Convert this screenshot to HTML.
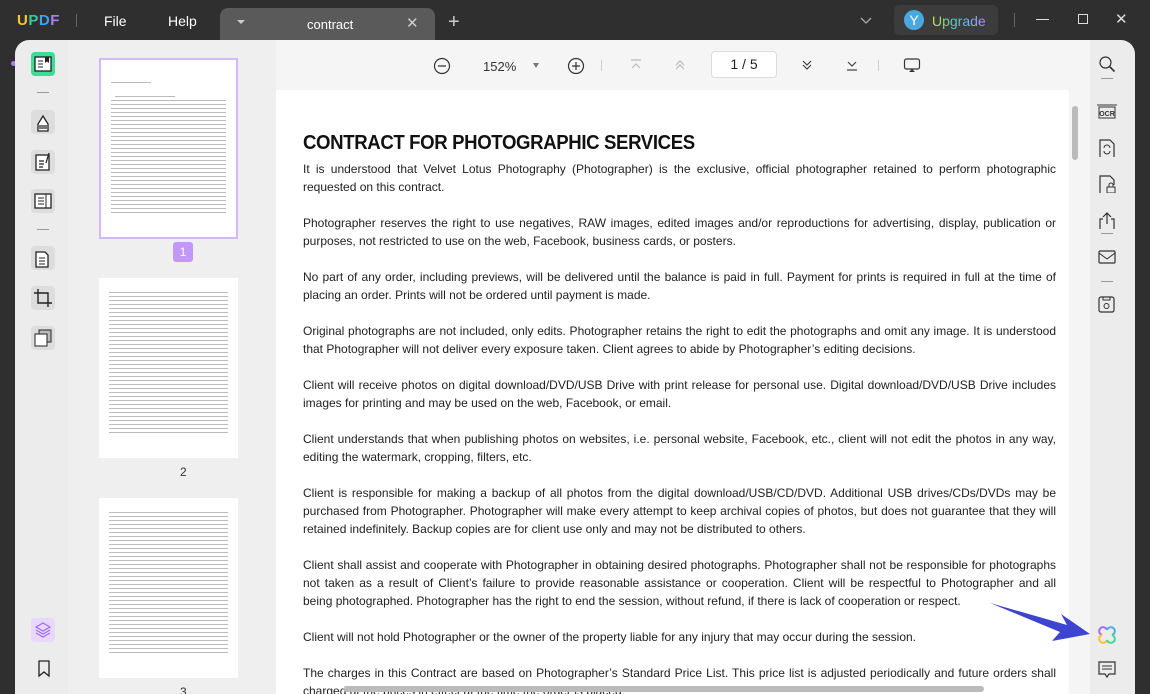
<!DOCTYPE html>
<html><head><meta charset="utf-8"><style>
*{margin:0;padding:0;box-sizing:border-box}
body{width:1150px;height:694px;background:#2f2f2f;font-family:"Liberation Sans",sans-serif;position:relative;overflow:hidden}
.abs{position:absolute}
.title{color:#fff;font-size:14px}
.main{left:15px;top:40px;width:1120px;height:654px;background:#ececec;border-radius:14px 14px 0 0;overflow:hidden}
.lbtn{position:absolute;left:16px;width:24px;height:24px;border-radius:4px;background:#ddd}
.sep{position:absolute;height:1px;width:12px;background:#999}
.thumbs{left:53px;top:0;width:208px;height:654px;background:#efefef}
.thumb{position:absolute;left:31px;width:139px;background:#fff}
.tl{height:1px;background:#bbb;margin:0 10px 3px 10px}
.doc{left:261px;top:0;width:814px;height:654px;background:#f5f5f5}
.page{left:0;top:50px;width:793px;height:604px;background:#fff;overflow:hidden}
.txt{position:absolute;left:27px;width:753px;font-size:12px;line-height:18px;color:#222}
.ln{text-align:justify;text-align-last:justify;height:18px;overflow:hidden}
.ln.l{text-align-last:left}
.p{margin-bottom:18px}
.ric{position:absolute;left:1098px;width:18px;height:18px}
</style></head><body>
<div class="abs" style="left:17px;top:12px;font-weight:bold;font-size:15px;letter-spacing:0.5px"><span style="color:#f9c52a">U</span><span style="color:#3ec7a0">P</span><span style="color:#3ba3f0">D</span><span style="color:#b07cf5">F</span></div>
<div class="abs" style="left:76px;top:14px;width:1px;height:13px;background:#666"></div>
<div class="abs title" style="left:104px;top:13px">File</div>
<div class="abs title" style="left:168px;top:13px">Help</div>
<div class="abs" style="left:220px;top:8px;width:215px;height:32px;background:#5a5a5a;border-radius:8px 8px 0 0"></div>
<div class="abs" style="left:237px;top:20px;border-left:4px solid transparent;border-right:4px solid transparent;border-top:4px solid #ccc"></div>
<div class="abs title" style="left:307px;top:17px;font-size:13px">contract</div>
<div class="abs" style="left:406px;top:14px;color:#ccc;font-size:15px">✕</div>
<div class="abs" style="left:448px;top:11px;color:#ccc;font-size:20px;font-weight:300">+</div>
<svg class="abs" style="left:859px;top:15px" width="14" height="10"><path d="M2 3l5 5 5-5" stroke="#aaa" fill="none" stroke-width="1.3"/></svg>
<div class="abs" style="left:894px;top:5px;width:104px;height:30px;background:#3c3c3c;border-radius:5px"></div>
<div class="abs" style="left:904px;top:10px;width:20px;height:20px;border-radius:50%;background:#4aa8e0;color:#fff;font-size:14px;text-align:center;line-height:20px">Y</div>
<div class="abs" style="left:932px;top:13px;font-size:14px;background:linear-gradient(90deg,#d9e34a,#5ad1a8,#6ab8f0,#b889f2);-webkit-background-clip:text;color:transparent">Upgrade</div>
<div class="abs" style="left:1014px;top:13px;width:1px;height:14px;background:#666"></div>
<div class="abs" style="left:1036px;top:19px;width:13px;height:1px;background:#ddd"></div>
<div class="abs" style="left:1078px;top:14px;width:10px;height:10px;border:1px solid #ddd"></div>
<div class="abs" style="left:1115px;top:10px;color:#ddd;font-size:15px">✕</div>
<div class="abs" style="left:11px;top:61px;width:5px;height:5px;border-radius:50%;background:#b07cf5"></div>

<div class="abs main">
 <div class="abs" style="left:16px;top:12px;width:24px;height:24px;border-radius:4px;background:#3ddc97"><svg width="24" height="24"><rect x="4" y="5" width="16" height="14" fill="#fff" stroke="#222" stroke-width="1.3"/><path d="M7 9h5M7 12h5M7 15h5" stroke="#222"/><path d="M14 5v6l2-1.5 2 1.5V5" fill="#222"/></svg></div>
 <div class="sep" style="left:22px;top:52px"></div>
 <div class="lbtn" style="top:70px"><svg width="24" height="24"><path d="M7 21v-7l5-8 5 8v7z" fill="#fff" stroke="#222" stroke-width="1.3"/><path d="M8 17h8" stroke="#777" stroke-width="4"/></svg></div>
 <div class="lbtn" style="top:110px"><svg width="24" height="24"><rect x="5" y="5" width="13" height="15" fill="#fff" stroke="#222" stroke-width="1.3"/><path d="M8 11h5M8 14h5M8 17h4M18 3l-3 10" stroke="#222" stroke-width="1.3"/></svg></div>
 <div class="lbtn" style="top:149px"><svg width="24" height="24"><rect x="4" y="5" width="16" height="14" fill="#fff" stroke="#222" stroke-width="1.3"/><path d="M7 9h6M7 12h6M7 15h6M15 5v14" stroke="#222"/></svg></div>
 <div class="sep" style="left:22px;top:189px"></div>
 <div class="lbtn" style="top:206px"><svg width="24" height="24"><path d="M5 6h9l3 3v12H5z" fill="#fff" stroke="#222" stroke-width="1.3"/><path d="M8 12h6M8 15h6M8 18h6" stroke="#222"/></svg></div>
 <div class="lbtn" style="top:246px"><svg width="24" height="24"><path d="M7 3v14h14M3 7h14v14" fill="none" stroke="#222" stroke-width="1.4"/></svg></div>
 <div class="lbtn" style="top:286px"><svg width="24" height="24"><rect x="8" y="4" width="12" height="12" fill="#bbb" stroke="#222"/><rect x="4" y="8" width="12" height="12" fill="#fff" stroke="#222"/></svg></div>
 <div class="abs" style="left:16px;top:578px;width:24px;height:24px;border-radius:4px;background:#e8d8fb"><svg width="24" height="24"><path d="M12 5l7 4-7 4-7-4z M5 12l7 4 7-4 M5 15l7 4 7-4" fill="none" stroke="#a46cf0" stroke-width="1.2"/></svg></div>
 <svg class="abs" style="left:22px;top:620px" width="14" height="18"><path d="M2 1h10v15l-5-4-5 4z" fill="none" stroke="#222" stroke-width="1.3"/></svg>

 <div class="abs thumbs">
  <div class="thumb" style="top:18px;height:181px;border:2px solid #d4b8f7;padding-top:22px"><div class="tl" style="width:40px"></div>
   <div style="padding-top:10px"></div>
   <div class="tl" style="margin-left:14px;width:60px"></div><div class="tl"></div><div class="tl"></div><div class="tl"></div><div class="tl"></div><div class="tl"></div><div class="tl"></div><div class="tl"></div><div class="tl"></div><div class="tl"></div><div class="tl"></div><div class="tl"></div><div class="tl"></div><div class="tl"></div><div class="tl"></div><div class="tl"></div><div class="tl"></div><div class="tl"></div><div class="tl"></div><div class="tl"></div><div class="tl"></div><div class="tl"></div><div class="tl"></div><div class="tl"></div><div class="tl"></div><div class="tl"></div><div class="tl"></div><div class="tl"></div><div class="tl"></div><div class="tl"></div></div>
  <div class="abs" style="left:105px;top:202px;width:20px;height:20px;background:#c397f8;border-radius:3px;color:#fff;font-size:12px;text-align:center;line-height:20px">1</div>
  <div class="thumb" style="top:238px;height:180px;padding-top:14px"><div class="tl"></div><div class="tl"></div><div class="tl"></div><div class="tl"></div><div class="tl"></div><div class="tl"></div><div class="tl"></div><div class="tl"></div><div class="tl"></div><div class="tl"></div><div class="tl"></div><div class="tl"></div><div class="tl"></div><div class="tl"></div><div class="tl"></div><div class="tl"></div><div class="tl"></div><div class="tl"></div><div class="tl"></div><div class="tl"></div><div class="tl"></div><div class="tl"></div><div class="tl"></div><div class="tl"></div><div class="tl"></div><div class="tl"></div><div class="tl"></div><div class="tl"></div><div class="tl"></div><div class="tl"></div><div class="tl"></div><div class="tl"></div><div class="tl"></div><div class="tl"></div><div class="tl"></div><div class="tl"></div></div>
  <div class="abs" style="left:112px;top:425px;font-size:12px;color:#333">2</div>
  <div class="thumb" style="top:458px;height:180px;padding-top:14px"><div class="tl"></div><div class="tl"></div><div class="tl"></div><div class="tl"></div><div class="tl"></div><div class="tl"></div><div class="tl"></div><div class="tl"></div><div class="tl"></div><div class="tl"></div><div class="tl"></div><div class="tl"></div><div class="tl"></div><div class="tl"></div><div class="tl"></div><div class="tl"></div><div class="tl"></div><div class="tl"></div><div class="tl"></div><div class="tl"></div><div class="tl"></div><div class="tl"></div><div class="tl"></div><div class="tl"></div><div class="tl"></div><div class="tl"></div><div class="tl"></div><div class="tl"></div><div class="tl"></div><div class="tl"></div><div class="tl"></div><div class="tl"></div><div class="tl"></div><div class="tl"></div><div class="tl"></div><div class="tl"></div></div>
  <div class="abs" style="left:112px;top:645px;font-size:12px;color:#333">3</div>
 </div>

 <div class="abs doc">
  <svg class="abs" style="left:157px;top:17px" width="18" height="18"><circle cx="9" cy="9" r="7.5" fill="none" stroke="#333" stroke-width="1.2"/><path d="M5 9h8" stroke="#333" stroke-width="1.2"/></svg>
  <div class="abs" style="left:207px;top:19px;font-size:13px;color:#333">152%</div>
  <div class="abs" style="left:257px;top:23px;border-left:3.5px solid transparent;border-right:3.5px solid transparent;border-top:5px solid #777"></div>
  <svg class="abs" style="left:291px;top:17px" width="18" height="18"><circle cx="9" cy="9" r="7.5" fill="none" stroke="#333" stroke-width="1.2"/><path d="M5 9h8M9 5v8" stroke="#333" stroke-width="1.2"/></svg>
  <div class="abs" style="left:325px;top:20px;width:1px;height:11px;background:#ccc"></div>
  <svg class="abs" style="left:353px;top:18px" width="14" height="14"><path d="M2 2h10M3 10l4-4 4 4" fill="none" stroke="#bbb" stroke-width="1.2"/></svg>
  <svg class="abs" style="left:397px;top:18px" width="14" height="14"><path d="M3 7l4-4 4 4M3 11l4-4 4 4" fill="none" stroke="#bbb" stroke-width="1.2"/></svg>
  <div class="abs" style="left:435px;top:11px;width:66px;height:27px;background:#fff;border:1px solid #ddd;border-radius:4px;text-align:center;line-height:25px;font-size:14px;color:#222">1 / 5</div>
  <svg class="abs" style="left:524px;top:18px" width="14" height="14"><path d="M3 3l4 4 4-4M3 7l4 4 4-4" fill="none" stroke="#444" stroke-width="1.2"/></svg>
  <svg class="abs" style="left:569px;top:18px" width="14" height="14"><path d="M3 4l4 4 4-4M2 12h10" fill="none" stroke="#444" stroke-width="1.2"/></svg>
  <div class="abs" style="left:602px;top:20px;width:1px;height:11px;background:#ccc"></div>
  <svg class="abs" style="left:627px;top:17px" width="18" height="16"><rect x="1.5" y="2" width="15" height="10" rx="2" fill="none" stroke="#333" stroke-width="1.2"/><path d="M6 15l3-3 3 3z" fill="#333"/></svg>

  <div class="abs page">
   <div class="abs" style="left:27px;top:42px;font-size:20px;font-weight:bold;color:#111;letter-spacing:-0.4px;transform:scaleX(0.93);transform-origin:left">CONTRACT FOR PHOTOGRAPHIC SERVICES</div>
   <div class="txt" style="top:70px">
    <div class="p"><div class="ln">It is understood that Velvet Lotus Photography (Photographer) is the exclusive, official photographer retained to perform photographic services</div><div class="ln l">requested on this contract.</div></div>
    <div class="p"><div class="ln">Photographer reserves the right to use negatives, RAW images, edited images and/or reproductions for advertising, display, publication or other</div><div class="ln l">purposes, not restricted to use on the web, Facebook, business cards, or posters.</div></div>
    <div class="p"><div class="ln">No part of any order, including previews, will be delivered until the balance is paid in full. Payment for prints is required in full at the time of</div><div class="ln l">placing an order. Prints will not be ordered until payment is made.</div></div>
    <div class="p"><div class="ln">Original photographs are not included, only edits. Photographer retains the right to edit the photographs and omit any image. It is understood</div><div class="ln l">that Photographer will not deliver every exposure taken. Client agrees to abide by Photographer’s editing decisions.</div></div>
    <div class="p"><div class="ln">Client will receive photos on digital download/DVD/USB Drive with print release for personal use. Digital download/DVD/USB Drive includes</div><div class="ln l">images for printing and may be used on the web, Facebook, or email.</div></div>
    <div class="p"><div class="ln">Client understands that when publishing photos on websites, i.e. personal website, Facebook, etc., client will not edit the photos in any way, i.e.</div><div class="ln l">editing the watermark, cropping, filters, etc.</div></div>
    <div class="p"><div class="ln">Client is responsible for making a backup of all photos from the digital download/USB/CD/DVD. Additional USB drives/CDs/DVDs may be</div><div class="ln">purchased from Photographer. Photographer will make every attempt to keep archival copies of photos, but does not guarantee that they will be</div><div class="ln l">retained indefinitely. Backup copies are for client use only and may not be distributed to others.</div></div>
    <div class="p"><div class="ln">Client shall assist and cooperate with Photographer in obtaining desired photographs. Photographer shall not be responsible for photographs</div><div class="ln">not taken as a result of Client’s failure to provide reasonable assistance or cooperation. Client will be respectful to Photographer and all parties</div><div class="ln l">being photographed. Photographer has the right to end the session, without refund, if there is lack of cooperation or respect.</div></div>
    <div class="p"><div class="ln l">Client will not hold Photographer or the owner of the property liable for any injury that may occur during the session.</div></div>
    <div class="p"><div class="ln">The charges in this Contract are based on Photographer’s Standard Price List. This price list is adjusted periodically and future orders shall be</div><div class="ln l">charged at the prices in effect at the time the order is placed.</div></div>
   </div>
  </div>
  <div class="abs" style="left:793px;top:50px;width:21px;height:604px;background:#f5f5f5"></div>
  <div class="abs" style="left:796px;top:66px;width:6px;height:54px;background:#bbb;border-radius:3px"></div>
  <div class="abs" style="left:68px;top:646px;width:640px;height:6px;background:#bbb;border-radius:3px"></div>
 </div>
</div>

<svg class="ric" style="top:55px" width="18" height="18"><circle cx="7.5" cy="7.5" r="5.5" fill="none" stroke="#333" stroke-width="1.2"/><path d="M11.5 11.5l5 5" stroke="#333" stroke-width="1.6"/></svg>
<div class="abs" style="left:1101px;top:78px;width:12px;height:1px;background:#999"></div>
<svg class="ric" style="top:102px;left:1096px;width:22px" width="22" height="18"><path d="M1 3h20" stroke="#333"/><rect x="3" y="5" width="16" height="11" fill="none" stroke="#333"/><text x="11" y="14" font-size="7" text-anchor="middle" font-family="Liberation Sans" fill="#333" font-weight="bold">OCR</text></svg>
<svg class="ric" style="top:139px" width="18" height="20"><path d="M2 1h10l4 4v14H2z" fill="none" stroke="#333" stroke-width="1.2"/><path d="M6 9a3 3 0 0 1 6 0M12 12a3 3 0 0 1-6 0" fill="none" stroke="#333"/></svg>
<svg class="ric" style="top:175px" width="18" height="20"><path d="M8 19H2V1h10l4 4v5" fill="none" stroke="#333" stroke-width="1.2"/><rect x="9" y="12" width="8" height="6" fill="none" stroke="#333"/><path d="M11 12v-2a2 2 0 0 1 4 0v2" fill="none" stroke="#333"/></svg>
<svg class="ric" style="top:211px" width="18" height="20"><path d="M5 8H2v11h14V8h-3M9 13V2M5 6l4-4 4 4" fill="none" stroke="#333" stroke-width="1.2"/></svg>
<svg class="ric" style="top:249px" width="18" height="16"><rect x="1" y="2" width="16" height="12" rx="1" fill="none" stroke="#333" stroke-width="1.2"/><path d="M1 4l8 6 8-6" fill="none" stroke="#333"/></svg>
<div class="abs" style="left:1101px;top:233px;width:12px;height:1px;background:#999"></div>
<div class="abs" style="left:1101px;top:281px;width:12px;height:1px;background:#999"></div>
<svg class="ric" style="top:296px" width="18" height="18"><rect x="1" y="1" width="15" height="15" rx="2" fill="none" stroke="#333" stroke-width="1.2"/><circle cx="8.5" cy="10" r="2.5" fill="none" stroke="#333"/><path d="M5 1v3h7V1" fill="none" stroke="#333"/></svg>
<svg class="ric" style="top:625px;left:1097px;width:20px;height:20px" width="20" height="20"><path d="M10 5a4 4 0 1 0-5 5" fill="none" stroke="#a46cf0" stroke-width="2"/><path d="M10 5a4 4 0 1 1 5 5" fill="none" stroke="#4ab0f0" stroke-width="2"/><path d="M5 10a4 4 0 1 0 5 5" fill="none" stroke="#f9c52a" stroke-width="2"/><path d="M15 10a4 4 0 1 1-5 5" fill="none" stroke="#3ddc97" stroke-width="2"/></svg>
<svg class="ric" style="top:661px" width="18" height="18"><path d="M1 1h16v12h-6l-2 3-2-3H1z" fill="none" stroke="#333" stroke-width="1.2"/><path d="M4 5h10M4 8h10" stroke="#333"/></svg>
<div class="abs" style="left:1135px;top:40px;width:15px;height:654px;background:#2f2f2f"></div>
<svg class="abs" style="left:985px;top:598px" width="110" height="50"><path d="M5 5L82 27L76 16L105 36L67 43L75 34Z" fill="#3d44cf"/></svg>
</body></html>
